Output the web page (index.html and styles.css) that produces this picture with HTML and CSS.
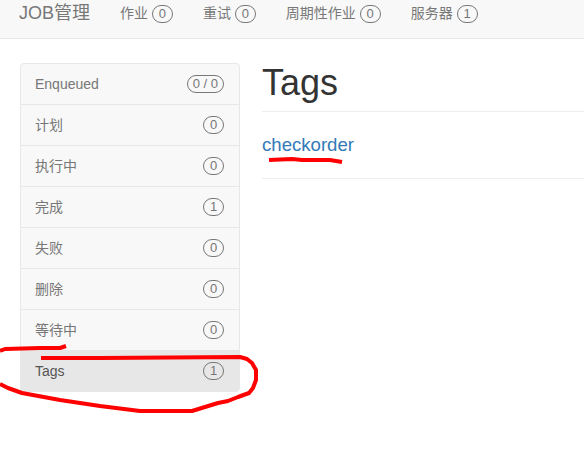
FILE: index.html
```html
<!DOCTYPE html>
<html lang="en">
<head>
    <meta charset="UTF-8">
    <title>JOB管理</title>
    <link rel="stylesheet" href="styles.css">
</head>
<body>
    <!-- Top nav -->
    <div class="navbar">
        <a class="brand" href="#">JOB管理</a>
        <a class="nav-link" href="#">作业 <span class="badge">0</span></a>
        <a class="nav-link" href="#">重试 <span class="badge">0</span></a>
        <a class="nav-link" href="#">周期性作业 <span class="badge">0</span></a>
        <a class="nav-link" href="#">服务器 <span class="badge">1</span></a>
    </div>

    <div class="page">
        <!-- Sidebar -->
        <div class="side-list">
            <a class="side-item" href="#">Enqueued <span class="badge">0 / 0</span></a>
            <a class="side-item" href="#">计划 <span class="badge">0</span></a>
            <a class="side-item" href="#">执行中 <span class="badge">0</span></a>
            <a class="side-item" href="#">完成 <span class="badge">1</span></a>
            <a class="side-item" href="#">失败 <span class="badge">0</span></a>
            <a class="side-item" href="#">删除 <span class="badge">0</span></a>
            <a class="side-item" href="#">等待中 <span class="badge">0</span></a>
            <a class="side-item active" href="#">Tags <span class="badge">1</span></a>
        </div>

        <!-- Tags -->
        <div class="main">
            <h1 class="title">Tags</h1>
            <div class="tag-row"><a href="#">checkorder</a></div>
        </div>
    </div>

    <!-- Red pen marks drawn over the page -->
    <svg class="marks" width="584" height="456" viewBox="0 0 584 456">
        <path d="M269 160 L292 159 L302 160 L330 160 L342 162"/>
        <path d="M0 351 L5 349 L40 348 L60 348 L66 346"/>
        <path d="M41 358 L100 358 L240 357 L247 359 L252 363 L256 370 L256 380 L253 388 L249 393 L238 397 L228 401 L218 403 L205 407 L192 411 L140 411 L100 406 L60 400 L22 393 L8 388 L0 384"/>
    </svg>
</body>
</html>
```

FILE: styles.css
```css
* {
    box-sizing: border-box;
}

body {
    margin: 0;
    height: 456px;
    overflow: hidden;
    position: relative;
    background: #fff;
    font-family: 'Liberation Sans', 'Noto Sans CJK SC', sans-serif;
    font-size: 14px;
    line-height: 20px;
    color: #333;
}

a {
    text-decoration: none;
}

/* Nav */
.navbar {
    display: flex;
    align-items: flex-start;
    height: 39px;
    padding-left: 4px;
    background: #f8f8f8;
    border-bottom: 1px solid #e7e7e7;
}

.brand {
    padding: 3px 15px 0;
    font-size: 18px;
    color: #777;
}

.nav-link {
    padding: 3px 15px 0;
    color: #777;
}

.badge {
    display: inline-block;
    min-width: 21px;
    padding: 0 5px;
    font-size: 13px;
    line-height: 16px;
    text-align: center;
    color: #777;
    border: 1px solid #777;
    border-radius: 10px;
}

/* Layout */
.page {
    display: flex;
    padding: 24px 0 0 20px;
}

/* Sidebar */
.side-list {
    width: 220px;
    flex-shrink: 0;
    background: #f8f8f8;
    border: 1px solid #e7e7e7;
    border-radius: 4px;
    overflow: hidden;
}

.side-item {
    display: flex;
    justify-content: space-between;
    align-items: center;
    height: 41px;
    padding: 0 15px 0 14px;
    color: #777;
    border-bottom: 1px solid #e7e7e7;
}

.side-item:last-child {
    height: 40px;
    border-bottom: 0;
}

.side-item.active {
    background: #e7e7e7;
    color: #555;
}

/* Main */
.main {
    flex: 1;
    margin-left: 22px;
}

.title {
    margin: 0;
    padding-bottom: 8px;
    font-size: 36px;
    font-weight: 500;
    line-height: 40px;
    border-bottom: 1px solid #eee;
}

.tag-row {
    padding: 20px 0 21px;
    font-size: 18.6px;
    line-height: 25px;
    border-bottom: 1px solid #eee;
}

.tag-row a {
    color: #337ab7;
}

/* Pen marks */
.marks {
    position: absolute;
    top: 0;
    left: 0;
}

.marks path {
    fill: none;
    stroke: #f00;
    stroke-width: 4;
    stroke-linejoin: round;
}
```
